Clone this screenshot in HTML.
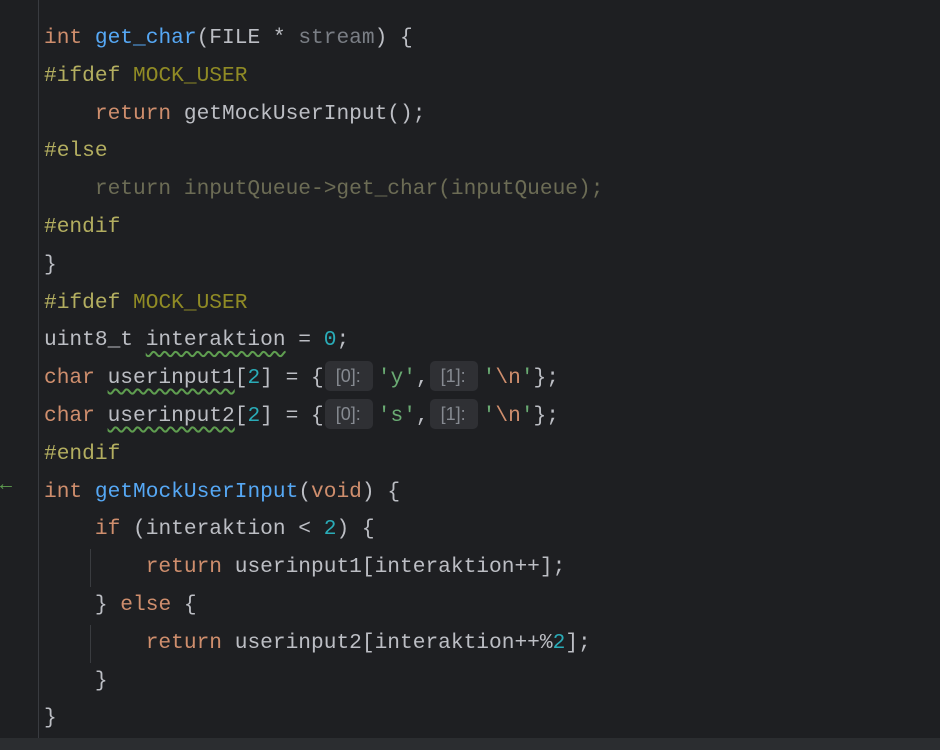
<!DOCTYPE html>
<html><head><meta charset="utf-8"><style>
html,body{margin:0;padding:0;}
body{width:940px;height:750px;background:#1e1f22;position:relative;overflow:hidden;font-family:"Liberation Mono","DejaVu Sans Mono",monospace;font-size:21.2px;color:#bcbec4;}
.gut{position:absolute;left:38px;top:0;width:1px;height:750px;background:#393b40;}
.bot{position:absolute;left:0;top:738px;width:940px;height:12px;background:#2b2d30;}
.code{position:absolute;left:44px;top:20px;}
.l{height:37.8px;line-height:37.8px;white-space:pre;}
.k{color:#cf8e6d}.f{color:#56a8f5}.n{color:#2aacb8}.p{color:#b3ae60}.m{color:#908b25}.pa{color:#7a7e85}.s{color:#6aab73}.d{color:#6c6c55}
.w{text-decoration:underline wavy #5f9e50;text-decoration-thickness:1.5px;text-underline-offset:5px}
.h{display:inline-block;background:#2f3034;color:#868a91;font-size:18px;line-height:30px;height:30px;padding:0 12px 0 11px;border-radius:5px;margin:0 5px 0 1px;vertical-align:1px;font-family:"Liberation Sans",sans-serif}
.ig{position:absolute;width:1px;background:#3a3c40;left:90px;}
.arr{position:absolute;left:0;top:474px;color:#5f9e50;font-size:20px}
</style></head><body>
<div class="gut"></div>
<div class="bot"></div>
<div class="ig" style="top:549px;height:38px"></div>
<div class="ig" style="top:625px;height:38px"></div>
<div class="arr">←</div>
<div class="code">
<div class="l"><span class="k">int</span> <span class="f">get_char</span>(FILE * <span class="pa">stream</span>) {</div>
<div class="l"><span class="p">#ifdef</span> <span class="m">MOCK_USER</span></div>
<div class="l">    <span class="k">return</span> getMockUserInput();</div>
<div class="l"><span class="p">#else</span></div>
<div class="l d">    return inputQueue-&gt;get_char(inputQueue);</div>
<div class="l"><span class="p">#endif</span></div>
<div class="l">}</div>
<div class="l"><span class="p">#ifdef</span> <span class="m">MOCK_USER</span></div>
<div class="l">uint8_t <span class="w">interaktion</span> = <span class="n">0</span>;</div>
<div class="l"><span class="k">char</span> <span class="w">userinput1</span>[<span class="n">2</span>] = {<span class="h">[0]:</span><span class="s">'y'</span>,<span class="h">[1]:</span><span class="s">'<span class="k">\n</span>'</span>};</div>
<div class="l"><span class="k">char</span> <span class="w">userinput2</span>[<span class="n">2</span>] = {<span class="h">[0]:</span><span class="s">'s'</span>,<span class="h">[1]:</span><span class="s">'<span class="k">\n</span>'</span>};</div>
<div class="l"><span class="p">#endif</span></div>
<div class="l"><span class="k">int</span> <span class="f">getMockUserInput</span>(<span class="k">void</span>) {</div>
<div class="l">    <span class="k">if</span> (interaktion &lt; <span class="n">2</span>) {</div>
<div class="l">        <span class="k">return</span> userinput1[interaktion++];</div>
<div class="l">    } <span class="k">else</span> {</div>
<div class="l">        <span class="k">return</span> userinput2[interaktion++%<span class="n">2</span>];</div>
<div class="l">    }</div>
<div class="l">}</div>
</div>
</body></html>
